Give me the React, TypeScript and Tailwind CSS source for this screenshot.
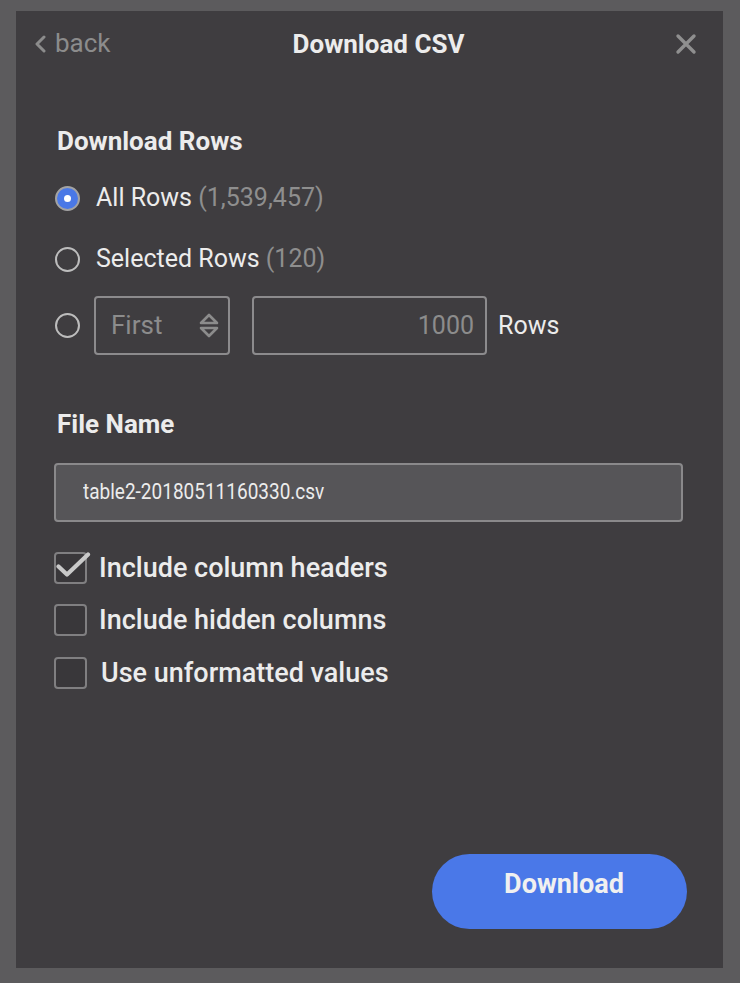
import React from "react";

const font = { fontFamily: "Roboto, 'Noto Sans', sans-serif" };

function Radio({ checked }: { checked?: boolean }) {
  return checked ? (
    <div className="w-[25px] h-[25px] rounded-full border-2 border-[#a3a3a3] bg-[#4a78e6] flex items-center justify-center shrink-0">
      <div className="w-[7px] h-[7px] rounded-full bg-white" />
    </div>
  ) : (
    <div className="w-[25px] h-[25px] rounded-full border-2 border-[#bdbdbd] shrink-0" />
  );
}

function Checkbox({ checked }: { checked?: boolean }) {
  return (
    <div className="relative w-[33px] h-[32px] rounded-[4px] border-2 border-[#807f81] bg-[#39373a] shrink-0">
      {checked && (
        <svg className="absolute left-[-2px] top-[-2px]" width="38" height="34" viewBox="0 0 38 34">
          <path d="M4.5 14.5 L13 22.5 L34 2.5" fill="none" stroke="#c9c9c9" strokeWidth="4.2" strokeLinecap="round" strokeLinejoin="round" />
        </svg>
      )}
    </div>
  );
}

export default function App() {
  return (
    <div className="w-[740px] h-[983px] bg-[#5c5b5d] pt-[11px] pl-[16px]" style={font}>
      <div className="w-[707px] h-[957px] bg-[#3f3d40] flex flex-col text-[#ececec]">
        {/* header */}
        <div className="h-[66px] flex items-center justify-between pl-[18px] pr-[26px] relative">
          <div className="flex items-center gap-[9px] text-[#8c8c8c] text-[26px]">
            <svg width="12" height="18" viewBox="0 0 12 18">
              <path d="M10 2 L3 9 L10 16" fill="none" stroke="#8c8c8c" strokeWidth="3" strokeLinejoin="round" strokeLinecap="round" />
            </svg>
            <span className="leading-none -mt-[2px]">back</span>
          </div>
          <div className="absolute left-[18px] right-0 text-center font-bold text-[26px] pointer-events-none text-[#ececec]">
            Download CSV
          </div>
          <svg width="22" height="22" viewBox="0 0 22 22">
            <path d="M3 3 L19 19 M19 3 L3 19" stroke="#8f8f8f" strokeWidth="3.4" strokeLinecap="round" />
          </svg>
        </div>

        <div className="flex flex-col pl-[39px] pr-[40px]">
          <div className="mt-[49px] ml-[2px] h-[30px] flex items-center font-bold text-[26px]">Download Rows</div>

          <div className="mt-[26px] h-[32px] flex items-center gap-[16px] text-[25px]">
            <Radio checked />
            <span>
              All Rows <span className="text-[#8e8e8e]">(1,539,457)</span>
            </span>
          </div>

          <div className="mt-[29px] h-[32px] flex items-center gap-[16px] text-[25px]">
            <Radio />
            <span>
              Selected Rows <span className="text-[#8e8e8e]">(120)</span>
            </span>
          </div>

          <div className="mt-[21px] flex items-center text-[25px]">
            <Radio />
            <div className="ml-[14px] w-[136px] h-[59px] rounded-[4px] border-2 border-[#8c8b8d] flex items-center justify-between pl-[15px] pr-[8px]">
              <span className="text-[#8c8c8c] text-[26px]">First</span>
              <svg width="22" height="30" viewBox="0 0 22 30">
                <path d="M3 12 L11 4 L19 12 Z" fill="none" stroke="#8c8c8c" strokeWidth="2.6" strokeLinejoin="round" />
                <path d="M3 17 L11 25 L19 17 Z" fill="none" stroke="#8c8c8c" strokeWidth="2.6" strokeLinejoin="round" />
              </svg>
            </div>
            <div className="ml-[22px] w-[235px] h-[59px] rounded-[4px] border-2 border-[#8c8b8d] flex items-center justify-end pr-[11px]">
              <span className="text-[#8c8c8c]">1000</span>
            </div>
            <span className="ml-[11px]">Rows</span>
          </div>

          <div className="mt-[54px] ml-[2px] h-[30px] flex items-center font-bold text-[26px]">File Name</div>

          <div className="mt-[24px] ml-[-1px] h-[59px] w-[629px] rounded-[4px] border-2 border-[#8a898b] bg-[#565558] flex items-center pl-[27px] text-[19px] text-[#ececec]">
            <span className="inline-block scale-y-[1.2] origin-center">table2-20180511160330.csv</span>
          </div>

          <div className="mt-[30px] ml-[-1px] h-[32px] flex items-center gap-[12px] text-[27px] leading-none font-medium">
            <Checkbox checked />
            <span>Include column headers</span>
          </div>
          <div className="mt-[20px] ml-[-1px] h-[32px] flex items-center gap-[12px] text-[27px] leading-none font-medium">
            <Checkbox />
            <span>Include hidden columns</span>
          </div>
          <div className="mt-[21px] ml-[-1px] h-[32px] flex items-center gap-[14px] text-[27px] leading-none font-medium">
            <Checkbox />
            <span>Use unformatted values</span>
          </div>
        </div>

        <div className="flex-1" />
        <div className="flex justify-end pr-[36px] pb-[39px]">
          <button className="w-[255px] h-[75px] rounded-full bg-[#4a78e8] text-[#f0f0f0] font-bold text-[27px] pb-[14px] pl-[9px]">
            Download
          </button>
        </div>
      </div>
    </div>
  );
}
